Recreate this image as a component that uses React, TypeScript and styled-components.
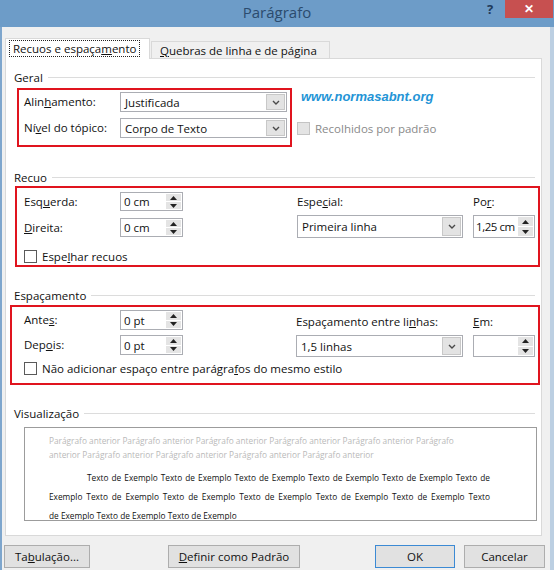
import React from "react";
import styled, { createGlobalStyle } from "styled-components";

const GlobalStyle = createGlobalStyle`
  html, body {
    margin: 0;
    padding: 0;
    background: #f0f0f0;
  }
  body {
    font-family: "Open Sans", "Noto Sans", sans-serif;
  }
  u {
    text-decoration: underline;
    text-underline-offset: 1px;
  }
`;

// Window chrome
const Window = styled.div`
  width: 554px;
  height: 570px;
  display: flex;
  flex-direction: column;
  overflow: hidden;
  background: #f0f0f0;
  font-family: "Open Sans", "Noto Sans", sans-serif;
  font-size: 11.5px;
  color: #111;
`;

const TitleBar = styled.div`
  height: 27px;
  flex: none;
  display: grid;
  grid-template-columns: 1fr auto 1fr;
  background: #6d9cc8;
`;

const Title = styled.div`
  grid-column: 2;
  font-size: 15px;
  line-height: 25px;
  color: #2b4b6e;
`;

const Controls = styled.div`
  grid-column: 3;
  display: flex;
  justify-content: flex-end;
  align-items: flex-start;
`;

const HelpButton = styled.span`
  width: 30px;
  height: 18px;
  display: flex;
  align-items: center;
  justify-content: center;
  font-weight: 700;
  font-size: 13px;
  color: #1f3a5a;
`;

const CloseButton = styled.span`
  width: 48px;
  height: 18px;
  margin-right: 1px;
  display: flex;
  align-items: center;
  justify-content: center;
  background: #c75050;
  color: #fff;
  font-weight: 700;
  font-size: 12px;
  line-height: 1;
`;

const Frame = styled.div`
  flex: 1;
  display: flex;
  flex-direction: column;
  border-left: 2px solid #7ea6cd;
  border-right: 4px solid #bccfe2;
`;

// Tabs
const TabStrip = styled.div`
  height: 21px;
  margin: 11px 0 0 3px;
  display: flex;
  align-items: flex-end;
  position: relative;
  z-index: 1;
`;

const Tab = styled.div<{ $active?: boolean; $w: number }>`
  width: ${(p) => p.$w}px;
  height: ${(p) => (p.$active ? 21 : 18)}px;
  margin-left: ${(p) => (p.$active ? 0 : 1)}px;
  box-sizing: border-box;
  display: flex;
  align-items: center;
  padding: ${(p) => (p.$active ? "0 0 1px 3px" : "0 0 0 8px")};
  background: ${(p) => (p.$active ? "#fff" : "#f0f0f0")};
  border: 1px solid #d9d9d9;
  border-bottom: ${(p) => (p.$active ? "none" : "1px solid #d9d9d9")};
  white-space: nowrap;
`;

const FocusRect = styled.span`
  border: 1px dotted #222;
  padding: 0 3px;
  line-height: 15px;
`;

const Panel = styled.div`
  width: 537px;
  height: 478px;
  margin: -1px 0 0 3px;
  box-sizing: border-box;
  background: #fff;
  border: 1px solid #d9d9d9;
  padding-top: 10px;
`;

// Groups
const GroupHeader = styled.div<{ $mt?: number }>`
  height: 16px;
  margin-top: ${(p) => p.$mt ?? 0}px;
  padding: 0 6px 0 8px;
  display: flex;
  align-items: center;
  gap: 5px;

  &::after {
    content: "";
    flex: 1;
    height: 1px;
    background: #dcdcdc;
  }
`;

const RedBox = styled.div<{ $ml: number; $mt: number; $w: number; $pb?: number }>`
  width: ${(p) => p.$w}px;
  margin: ${(p) => p.$mt}px 0 0 ${(p) => p.$ml}px;
  padding-bottom: ${(p) => p.$pb ?? 0}px;
  box-sizing: border-box;
  border: 2px solid #e0141e;
`;

const GeneralRow = styled.div`
  display: flex;
  align-items: flex-start;
`;

const GeneralGrid = styled.div`
  display: grid;
  grid-template-columns: 96px 167px;
  grid-auto-rows: 20px;
  row-gap: 6px;
  align-items: center;
  padding: 2px 3px 7px 5px;
`;

const GeneralAside = styled.div`
  margin-left: 5px;
  padding-top: 4px;
  display: flex;
  flex-direction: column;
`;

const SiteLink = styled.span`
  height: 16px;
  line-height: 16px;
  padding-left: 4px;
  font-family: "Liberation Sans", Arial, sans-serif;
  font-size: 13px;
  font-weight: 700;
  font-style: italic;
  color: #2394d6;
`;

const BoxTop = styled.div`
  display: flex;
  align-items: flex-start;
`;

const FieldGrid = styled.div<{ $w: number; $pl: number; $pt: number; $row: number; $gap: number }>`
  width: ${(p) => p.$w}px;
  box-sizing: border-box;
  padding: ${(p) => p.$pt}px 0 0 ${(p) => p.$pl}px;
  display: grid;
  grid-template-columns: 96px 63px;
  grid-auto-rows: ${(p) => p.$row}px;
  row-gap: ${(p) => p.$gap}px;
  align-items: center;
`;

const FieldCol = styled.div<{ $ml?: number; $pt: number }>`
  margin-left: ${(p) => p.$ml ?? 0}px;
  padding-top: ${(p) => p.$pt}px;
  display: flex;
  flex-direction: column;
`;

const Label = styled.span`
  line-height: 16px;
  white-space: nowrap;
`;

const FieldLabel = styled(Label)`
  height: 16px;
  margin-bottom: 5px;
`;

const CheckRow = styled.div<{ $mt?: number; $pl?: number; $disabled?: boolean }>`
  height: 16px;
  margin-top: ${(p) => p.$mt ?? 0}px;
  padding-left: ${(p) => p.$pl ?? 0}px;
  display: flex;
  align-items: center;
  gap: 5px;
  white-space: nowrap;
  color: ${(p) => (p.$disabled ? "#8a8a8a" : "#111")};
`;

const CheckBox = styled.span<{ $disabled?: boolean }>`
  width: 13px;
  height: 13px;
  box-sizing: border-box;
  flex: none;
  border: 1px solid ${(p) => (p.$disabled ? "#c4c4c4" : "#5a5a5a")};
  background: ${(p) => (p.$disabled ? "#e4e4e4" : "#fff")};
`;

// Controls
const SelectBox = styled.div<{ $w: number; $h: number }>`
  width: ${(p) => p.$w}px;
  height: ${(p) => p.$h}px;
  box-sizing: border-box;
  display: flex;
  border: 1px solid #abadb3;
  background: #fff;
`;

const SelectValue = styled.span`
  flex: 1;
  display: flex;
  align-items: center;
  padding-left: 4px;
  white-space: nowrap;
`;

const SelectArrow = styled.span`
  width: 17px;
  margin: 1px;
  display: flex;
  align-items: center;
  justify-content: center;
  background: #e3e3e3;
  border: 1px solid #c8c8c8;
`;

const SpinBox = styled.div<{ $w: number; $h: number }>`
  width: ${(p) => p.$w}px;
  height: ${(p) => p.$h}px;
  box-sizing: border-box;
  display: flex;
  border: 1px solid #abadb3;
  background: #fff;
`;

const SpinValue = styled.span<{ $compact?: boolean }>`
  flex: 1;
  min-width: 0;
  display: flex;
  align-items: center;
  padding-left: ${(p) => (p.$compact ? 2 : 3)}px;
  letter-spacing: ${(p) => (p.$compact ? "-0.45px" : "0")};
  white-space: nowrap;
  overflow: hidden;
`;

const SpinButtons = styled.span`
  width: 15px;
  flex: none;
  padding: 1px;
  display: flex;
  flex-direction: column;
  gap: 1px;
`;

const SpinHalf = styled.span`
  flex: 1;
  display: flex;
  align-items: center;
  justify-content: center;
  background: #e4e4e4;
`;

// Preview
const Preview = styled.div`
  width: 513px;
  height: 94px;
  margin: 6px 0 0 18px;
  box-sizing: border-box;
  border: 1px solid #9c9c9c;
  padding: 6px 0 0 24px;
  overflow: hidden;
  background: #fff;
`;

const PrevLine = styled.div`
  font-size: 8.3px;
  line-height: 14px;
  color: #b9b9b9;
  white-space: nowrap;
`;

const SampleBlock = styled.div`
  width: 441px;
  margin-top: 6px;
`;

const SampleLine = styled.div<{ $indent?: number; $justify?: boolean }>`
  padding-left: ${(p) => p.$indent ?? 0}px;
  font-size: 8.3px;
  line-height: 19px;
  color: #111;
  white-space: nowrap;
  text-align: ${(p) => (p.$justify ? "justify" : "left")};
  text-align-last: ${(p) => (p.$justify ? "justify" : "auto")};
`;

// Bottom buttons
const ButtonRow = styled.div`
  margin-top: 9px;
  display: flex;
  padding-left: 2px;
`;

const DialogButton = styled.span<{ $w: number; $ml?: number; $primary?: boolean }>`
  width: ${(p) => p.$w}px;
  height: 23px;
  margin-left: ${(p) => p.$ml ?? 0}px;
  box-sizing: border-box;
  display: flex;
  align-items: center;
  justify-content: center;
  background: #e1e1e1;
  border: 1px solid ${(p) => (p.$primary ? "#3c8ad4" : "#adadad")};
  white-space: nowrap;
`;

const Chevron = () => (
  <svg width="8" height="5" viewBox="0 0 8 5">
    <path d="M1 1 L4 4 L7 1" fill="none" stroke="#4a4a4a" strokeWidth="1.4" />
  </svg>
);

const Triangle = ({ up }: { up?: boolean }) => (
  <svg width="7" height="4" viewBox="0 0 7 4">
    <path d={up ? "M0 4 L3.5 0 L7 4Z" : "M0 0 L3.5 4 L7 0Z"} fill="#222" />
  </svg>
);

const Select = ({ value, w, h }: { value: string; w: number; h: number }) => (
  <SelectBox $w={w} $h={h}>
    <SelectValue>{value}</SelectValue>
    <SelectArrow>
      <Chevron />
    </SelectArrow>
  </SelectBox>
);

type SpinProps = { value: string; w: number; h: number; compact?: boolean };

const Spin = ({ value, w, h, compact }: SpinProps) => (
  <SpinBox $w={w} $h={h}>
    <SpinValue $compact={compact}>{value}</SpinValue>
    <SpinButtons>
      <SpinHalf>
        <Triangle up />
      </SpinHalf>
      <SpinHalf>
        <Triangle />
      </SpinHalf>
    </SpinButtons>
  </SpinBox>
);

const App: React.FC = () => {
  return (
    <Window>
      <GlobalStyle />
      <TitleBar>
        <Title>Parágrafo</Title>
        <Controls>
          <HelpButton>?</HelpButton>
          <CloseButton>✕</CloseButton>
        </Controls>
      </TitleBar>

      <Frame>
        <TabStrip>
          <Tab $active $w={145}>
            <FocusRect>
              Recuos e espaça<u>m</u>ento
            </FocusRect>
          </Tab>
          <Tab $w={179}>
            <span>
              <u>Q</u>uebras de linha e de página
            </span>
          </Tab>
        </TabStrip>

        <Panel>
          <GroupHeader>Geral</GroupHeader>
          <GeneralRow>
            <RedBox $ml={11} $mt={3} $w={275}>
              <GeneralGrid>
                <Label>
                  Alin<u>h</u>amento:
                </Label>
                <Select value="Justificada" w={167} h={20} />
                <Label>
                  Ní<u>v</u>el do tópico:
                </Label>
                <Select value="Corpo de Texto" w={167} h={20} />
              </GeneralGrid>
            </RedBox>
            <GeneralAside>
              <SiteLink>www.normasabnt.org</SiteLink>
              <CheckRow $mt={15} $disabled>
                <CheckBox $disabled />
                Recolhidos por padrão
              </CheckRow>
            </GeneralAside>
          </GeneralRow>

          <GroupHeader $mt={22}>Recuo</GroupHeader>
          <RedBox $ml={9} $mt={1} $w={525} $pb={1}>
            <BoxTop>
              <FieldGrid $w={280} $pl={7} $pt={4} $row={19} $gap={7}>
                <Label>
                  Esq<u>u</u>erda:
                </Label>
                <Spin value="0 cm" w={63} h={19} />
                <Label>
                  <u>D</u>ireita:
                </Label>
                <Spin value="0 cm" w={63} h={19} />
              </FieldGrid>
              <FieldCol $pt={6}>
                <FieldLabel>
                  Espe<u>c</u>ial:
                </FieldLabel>
                <Select value="Primeira linha" w={166} h={23} />
              </FieldCol>
              <FieldCol $pt={6} $ml={10}>
                <FieldLabel>
                  Po<u>r</u>:
                </FieldLabel>
                <Spin value="1,25 cm" w={62} h={23} compact />
              </FieldCol>
            </BoxTop>
            <CheckRow $mt={10} $pl={7}>
              <CheckBox />
              <span>
                Espe<u>l</u>har recuos
              </span>
            </CheckRow>
          </RedBox>

          <GroupHeader $mt={20}>Espaçamento</GroupHeader>
          <RedBox $ml={4} $mt={2} $w={530} $pb={7}>
            <BoxTop>
              <FieldGrid $w={284} $pl={12} $pt={3} $row={20} $gap={5}>
                <Label>
                  Ante<u>s</u>:
                </Label>
                <Spin value="0 pt" w={63} h={20} />
                <Label>
                  Dep<u>o</u>is:
                </Label>
                <Spin value="0 pt" w={63} h={20} />
              </FieldGrid>
              <FieldCol $pt={7}>
                <FieldLabel>
                  Espaçamento entre li<u>n</u>has:
                </FieldLabel>
                <Select value="1,5 linhas" w={167} h={22} />
              </FieldCol>
              <FieldCol $pt={7} $ml={10}>
                <FieldLabel>
                  <u>E</u>m:
                </FieldLabel>
                <Spin value="" w={62} h={22} />
              </FieldCol>
            </BoxTop>
            <CheckRow $mt={3} $pl={12}>
              <CheckBox />
              <span>
                Não adicionar espaço entre parágra<u>f</u>os do mesmo estilo
              </span>
            </CheckRow>
          </RedBox>

          <GroupHeader $mt={20}>Visualização</GroupHeader>
          <Preview>
            <PrevLine>
              Parágrafo anterior Parágrafo anterior Parágrafo anterior Parágrafo anterior Parágrafo
              anterior Parágrafo
            </PrevLine>
            <PrevLine>
              anterior Parágrafo anterior Parágrafo anterior Parágrafo anterior Parágrafo anterior
            </PrevLine>
            <SampleBlock>
              <SampleLine $indent={38} $justify>
                Texto de Exemplo Texto de Exemplo Texto de Exemplo Texto de Exemplo Texto de Exemplo
                Texto de
              </SampleLine>
              <SampleLine $justify>
                Exemplo Texto de Exemplo Texto de Exemplo Texto de Exemplo Texto de Exemplo Texto de
                Exemplo Texto
              </SampleLine>
              <SampleLine>de Exemplo Texto de Exemplo Texto de Exemplo</SampleLine>
            </SampleBlock>
          </Preview>
        </Panel>

        <ButtonRow>
          <DialogButton $w={86}>
            Ta<u>b</u>ulação...
          </DialogButton>
          <DialogButton $w={132} $ml={78}>
            <span>
              <u>D</u>efinir como Padrão
            </span>
          </DialogButton>
          <DialogButton $w={80} $ml={75} $primary>
            OK
          </DialogButton>
          <DialogButton $w={81} $ml={9}>
            Cancelar
          </DialogButton>
        </ButtonRow>
      </Frame>
    </Window>
  );
};

export default App;
